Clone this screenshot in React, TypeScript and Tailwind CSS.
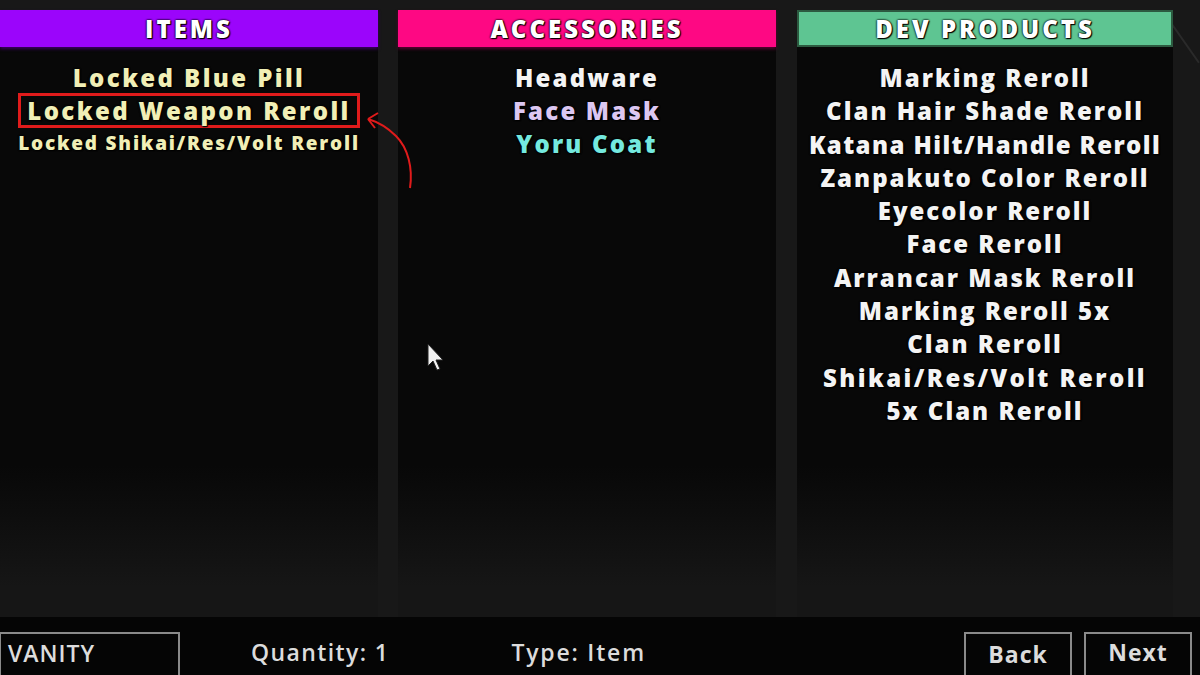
import React from "react";

const outline = "[text-shadow:0_0_2px_#000,0_0_2px_#000,1px_1px_1px_#000]";

function Header({ label, className }: { label: string; className: string }) {
  return (
    <div className={`h-[37px] flex items-center justify-center ${className}`}>
      <span className={`text-white text-[24px] font-extrabold tracking-[3px] ${outline}`}>{label}</span>
    </div>
  );
}

export default function App() {
  const devProducts = [
    { name: "Marking Reroll", track: "" },
    { name: "Clan Hair Shade Reroll", track: "" },
    { name: "Katana Hilt/Handle Reroll", track: "tracking-[1.4px]" },
    { name: "Zanpakuto Color Reroll", track: "" },
    { name: "Eyecolor Reroll", track: "" },
    { name: "Face Reroll", track: "" },
    { name: "Arrancar Mask Reroll", track: "" },
    { name: "Marking Reroll 5x", track: "" },
    { name: "Clan Reroll", track: "" },
    { name: "Shikai/Res/Volt Reroll", track: "tracking-[2.4px]" },
    { name: "5x Clan Reroll", track: "" },
  ];

  return (
    <div
      className="relative w-[1200px] h-[675px] overflow-hidden bg-[#181818] flex flex-col"
      style={{ fontFamily: '"Open Sans", "Liberation Sans", sans-serif' }}
    >
      {/* panels */}
      <div className="flex shrink-0 pt-[10px] h-[617px]">
        {/* items */}
        <div className="w-[378px] flex flex-col bg-gradient-to-b from-[#080808] from-75% to-[#161616] to-95%">
          <Header label="ITEMS" className="bg-[#9b05fb] shadow-[0_2px_3px_#3a0060]" />
          <div className="flex flex-col items-center pt-[14px] leading-[33px] text-[#f1efb6]">
            <div className={`text-[24px] font-extrabold tracking-[2.4px] ${outline}`}>Locked Blue Pill</div>
            <div className={`text-[24px] font-extrabold tracking-[2.4px] ${outline} border-[3px] border-[#e01b1b] px-[6px] leading-[29px] -my-[1px]`}>
              Locked Weapon Reroll
            </div>
            <div className={`text-[19px] font-extrabold tracking-[1.8px] ${outline} leading-[33px]`}>Locked Shikai/Res/Volt Reroll</div>
          </div>
        </div>
        <div className="w-[20px]" />
        {/* accessories */}
        <div className="w-[378px] flex flex-col bg-gradient-to-b from-[#080808] from-75% to-[#161616] to-95%">
          <Header label="ACCESSORIES" className="bg-[#fe0883] shadow-[0_2px_3px_#5a0030]" />
          <div className={`flex flex-col items-center pt-[14px] leading-[33px] text-[24px] font-extrabold tracking-[2.2px] ${outline}`}>
            <div className="text-[#f4f4f4]">Headware</div>
            <div className="text-[#dcc7f2]">Face Mask</div>
            <div className="text-[#74e9df]">Yoru Coat</div>
          </div>
        </div>
        <div className="w-[21px]" />
        {/* dev products */}
        <div className="w-[376px] flex flex-col bg-gradient-to-b from-[#080808] from-75% to-[#161616] to-95%">
          <Header label="DEV PRODUCTS" className="bg-[#5ec592] border-2 border-[#2c5a40]" />
          <div className={`flex flex-col items-center pt-[14px] leading-[33.3px] text-[24px] font-extrabold tracking-[2px] text-[#f4f4f4] ${outline}`}>
            {devProducts.map((p) => (
              <div key={p.name} className={`whitespace-nowrap ${p.track}`}>{p.name}</div>
            ))}
          </div>
        </div>
        <div className="flex-1 relative overflow-hidden">
          <div className="absolute left-[2px] top-[-20px] w-[2px] h-[80px] bg-[#2a2a2a] rotate-[-35deg]" />
        </div>
      </div>

      {/* bottom bar */}
      <div className="flex-1 bg-[#050505] flex items-start pt-[15px] text-[#dcdcdc] text-[23px] font-semibold tracking-[1px] overflow-hidden">
        <div className="shrink-0 w-[181px] h-[50px] border-2 border-[#8a8a8a] -ml-[1px] pl-[7px] pt-[2px]">VANITY</div>
        <div className="ml-[71px] pt-[3px] tracking-[1.4px]">Quantity: 1</div>
        <div className="ml-[122px] pt-[3px] tracking-[1.8px]">Type: Item</div>
        <div className="ml-auto flex gap-[12px] mr-[8px]">
          <div className="w-[108px] h-[50px] border-2 border-[#8a8a8a] flex justify-center pt-[3px] font-bold">Back</div>
          <div className="w-[108px] h-[50px] border-2 border-[#8a8a8a] flex justify-center pt-[1px] font-bold">Next</div>
        </div>
      </div>

      {/* red arrow annotation */}
      <svg className="absolute left-[360px] top-[108px]" width="60" height="82" viewBox="0 0 60 82" fill="none">
        <path d="M50 80 C53 60 48 40 36 28 C28 20 18 14 8 11" stroke="#e01b1b" strokeWidth="2" />
        <path d="M8 11 L18 5 M8 11 L15 20" stroke="#e01b1b" strokeWidth="2" />
      </svg>

      {/* cursor */}
      <svg className="absolute left-[427px] top-[343px]" width="20" height="30" viewBox="0 0 20 30">
        <path d="M1 1 L1 23 L6 18 L10 27 L13 26 L9 17 L16 17 Z" fill="#f2f2f2" stroke="#222" strokeWidth="1" />
      </svg>
    </div>
  );
}
